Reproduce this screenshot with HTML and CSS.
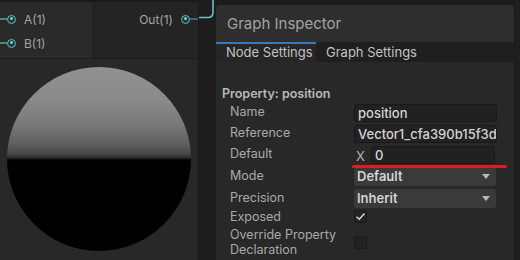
FILE: index.html
```html
<!DOCTYPE html>
<html>
<head>
<meta charset="utf-8">
<link rel="stylesheet" href="styles.css">
</head>
<body>
<div class="canvas">
  <div class="node">
    <div class="node-top"></div>
    <div class="ports">
      <div class="inputs">
        <div class="port-row in"><span class="wire-stub"></span><span class="port"></span><span class="plabel">A(1)</span></div>
        <div class="port-row in"><span class="wire-stub"></span><span class="port"></span><span class="plabel">B(1)</span></div>
      </div>
      <div class="outputs">
        <div class="port-row out"><span class="plabel">Out(1)</span><span class="port"></span><span class="wire-stub dark"></span></div>
      </div>
    </div>
    <div class="preview"><div class="sphere"></div></div>
  </div>
  <div class="gutter">
    <svg class="wire" width="20" height="24" viewBox="0 0 20 24"><path d="M0 17.5 H9 Q14 17.5 14 12 V0" fill="none" stroke="#6bbec7" stroke-width="1.6"/></svg>
  </div>
  <div class="inspector">
    <div class="insp-head">Graph Inspector</div>
    <div class="tabs">
      <div class="tab active">Node Settings</div>
      <div class="tab">Graph Settings</div>
    </div>
    <div class="content">
      <div class="section">Property: position</div>
      <div class="row r-name"><span class="lbl">Name</span><div class="field">position</div></div>
      <div class="row r-ref"><span class="lbl">Reference</span><div class="field">Vector1_cfa390b15f3d</div></div>
      <div class="row r-def"><span class="lbl">Default</span><div class="vec"><span class="xl">X</span><div class="field small">0</div></div></div>
      <div class="row r-mode"><span class="lbl">Mode</span><div class="drop">Default<span class="arrow"></span></div></div>
      <div class="row r-prec"><span class="lbl">Precision</span><div class="drop">Inherit<span class="arrow"></span></div></div>
      <div class="row r-exp"><span class="lbl">Exposed</span><div class="check"><svg width="11" height="9" viewBox="0 0 11 9"><path d="M1.5 4.8 L4.2 7.2 L9.5 1.6" fill="none" stroke="#d8d8d8" stroke-width="1.4"/></svg></div></div>
      <div class="row r-over"><span class="lbl">Override Property<br>Declaration</span><div class="check"></div></div>
      <div class="redline"></div>
    </div>
  </div>
  <div class="right-edge"></div>
</div>
</body>
</html>
```
FILE: styles.css
```css
* { box-sizing: border-box; }
html, body { margin: 0; padding: 0; }
body {
  width: 520px; height: 260px; overflow: hidden;
  background: #1c1c1c;
  font-family: Inter, "Noto Sans", sans-serif;
}
.canvas { display: flex; width: 520px; height: 260px; }

.node { width: 199px; flex-shrink: 0; display: flex; flex-direction: column; border-right: 1px solid #1a1a1a; }
.node-top { height: 2px; flex-shrink: 0; background: #1b1b1b; }
.ports { display: flex; height: 57px; flex-shrink: 0; border-bottom: 1px solid #1d1d1d; }
.inputs { width: 93px; background: #2a2a2a; border-right: 1px solid #1f1f1f; padding-top: 5px; }
.outputs { flex: 1; background: #242424; padding-top: 5px; display: flex; flex-direction: column; align-items: flex-end; }
.port-row { display: flex; align-items: center; height: 24px; }
.port-row.in .wire-stub { width: 7px; height: 1.5px; background: #4d8587; }
.port-row.out .wire-stub { width: 8px; height: 1.5px; background: #3b6467; }
.port {
  width: 9px; height: 9px; border-radius: 50%;
  border: 1.5px solid #5cbdc6; position: relative; background: #23393b;
}
.port::after {
  content: ""; position: absolute; left: 1.5px; top: 1.5px; width: 3px; height: 3px; border-radius: 50%; background: #6fd0d8;
}
.port-row.in .plabel { margin-left: 8px; }
.port-row.out .plabel { margin-right: 8px; }
.plabel { color: #a4a4a4; font-size: 12px; }

.preview { flex: 1; background: #282828; display: flex; justify-content: center; padding-top: 8px; }
.sphere {
  width: 184px; height: 184px; border-radius: 50%; flex-shrink: 0;
  background: linear-gradient(to bottom, #919191 0%, #8a8a8a 18%, #787878 32%, #5e5e5e 42%, #474747 47%, #2e2e2e 49.2%, #0c0c0c 50.2%, #000 51%, #000 100%);
}

.gutter { width: 17px; flex-shrink: 0; position: relative; background: #1d1d1d; }
.wire { position: absolute; left: 0; top: 0; }

.inspector {
  width: 299px; flex-shrink: 0; margin-top: 5px; background: #282828;
  border-radius: 4px 4px 0 0; display: flex; flex-direction: column;
  border-right: 1px solid #191919; min-height: 0; overflow: hidden;
}
.insp-head {
  height: 37px; flex-shrink: 0; background: #2e2e2e; border-radius: 4px 4px 0 0;
  color: #a3a3a3; font-size: 15px; padding-left: 11px; display: flex; align-items: center; padding-bottom: 1px;
}
.tabs { display: flex; height: 20px; flex-shrink: 0; background: #1f1f1f; }
.tab { font-size: 13px; color: #c2c2c2; padding: 0 10px; display: flex; align-items: center; white-space: nowrap; }
.tab.active { width: 100px; background: #262626; border-top: 2px solid #3a78bd; padding-bottom: 2px; }
.tab:not(.active) { padding-bottom: 1px; }

.content { position: relative; flex: 1; min-height: 0; padding: 24px 0 0 6px; }
.section { font-size: 12.5px; font-weight: 600; color: #b9b9b9; height: 15px; line-height: 15px; }
.row { display: flex; align-items: center; height: 21px; flex-shrink: 0; }
.lbl { width: 132px; padding-left: 8px; color: #a9a9a9; font-size: 12.5px; padding-bottom: 2px; }
.field {
  width: 143px; height: 18px; background: #212121; border: 1px solid #191919; border-radius: 3px;
  color: #d3d3d3; font-size: 13px; font-weight: 500; padding-left: 3px; line-height: 16px; overflow: hidden; white-space: nowrap;
}
.vec { display: flex; align-items: center; }
.xl { color: #b4b4b4; font-size: 13px; width: 17px; padding-left: 2px; padding-top: 3px; }
.field.small { width: 124px; }
.drop {
  width: 142px; height: 19px; background: #3a3a3a; border-radius: 3px; position: relative;
  color: #d3d3d3; font-size: 13px; font-weight: 600; padding-left: 3px; line-height: 19px;
}
.arrow {
  position: absolute; right: 6px; top: 7px; width: 0; height: 0;
  border-left: 4px solid transparent; border-right: 4px solid transparent; border-top: 5px solid #b8b8b8;
}
.r-name { margin-top: 1px; }
.r-mode { height: 22px; }
.r-prec { height: 22px; }
.r-exp { height: 15px; }
.r-exp .lbl { padding-bottom: 0; }
.check {
  width: 13px; height: 13px; background: #232323; border: 1px solid #1a1a1a; border-radius: 2px;
  display: flex; align-items: center; justify-content: center;
}
.r-over { height: 29px; margin-top: 4px; }
.r-over .lbl { line-height: 14.5px; padding-bottom: 0; }
.redline {
  position: absolute; left: 136px; top: 103px; width: 155px; height: 3px; border-radius: 2px; background: #e01d1d;
}
.right-edge { flex: 1; background: #1e1e1e; }
```
